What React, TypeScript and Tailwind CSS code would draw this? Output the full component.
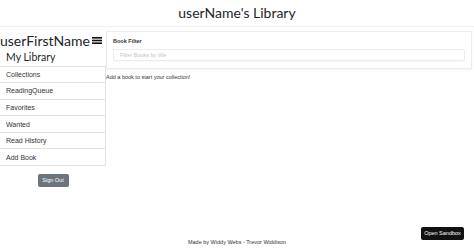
import React from "react";

const items = ["Collections", "ReadingQueue", "Favorites", "Wanted", "Read History", "Add Book"];

export default function App() {
  return (
    <div className="relative flex h-[248px] w-[474px] flex-col overflow-hidden bg-white text-[#212529] [font-family:'Liberation_Sans',Arial,sans-serif]">
      <header className="flex h-[27px] shrink-0 items-center justify-center border-b border-[#f0f0f0]">
        <h1 className="text-[14px] leading-none text-[#212529] [font-family:Lato,sans-serif]">userName's Library</h1>
      </header>
      <div className="flex flex-1">
        <aside className="flex w-[106px] shrink-0 flex-col">
          <div className="mt-[5px] flex h-[17px] items-center gap-[2px]">
            <span className="text-[14px] leading-none [font-family:Lato,sans-serif]">userFirstName</span>
            <svg width="10" height="7" viewBox="0 0 10 7" className="mt-[-1px]">
              <rect x="0" y="0" width="10" height="1.6" fill="#111" />
              <rect x="0" y="2.7" width="10" height="1.6" fill="#111" />
              <rect x="0" y="5.4" width="10" height="1.6" fill="#111" />
            </svg>
          </div>
          <div className="mt-[2px] flex h-[13px] items-center pl-[6px]">
            <span className="text-[10.5px] leading-none [font-family:Lato,sans-serif]">My Library</span>
          </div>
          <ul className="mt-[1.5px] border-r border-t border-[#e2e2e2]">
            {items.map((it) => (
              <li
                key={it}
                className="flex h-[16.6px] items-center border-b border-[#e2e2e2] pl-[6px] text-[7px] leading-none text-[#333]"
              >
                {it}
              </li>
            ))}
          </ul>
          <div className="mt-[8px] flex justify-center">
            <button className="flex h-[13px] w-[31px] items-center justify-center rounded-[2px] bg-[#6c757d] text-[5.5px] leading-none text-white">
              Sign Out
            </button>
          </div>
        </aside>
        <main className="flex-1 pr-[2px] pt-[4px]">
          <div className="border border-[#ececec] px-[6px] pb-[7px] pt-[6px] shadow-[0_1px_2px_rgba(0,0,0,0.06)]">
            <div className="text-[5.5px] font-bold leading-[7px] text-[#333]">Book Filter</div>
            <div className="mt-[4px] flex h-[12px] items-center rounded-[2px] border border-[#ececec] pl-[6px] text-[5.5px] text-[#c4c4c4] shadow-[0_1px_1px_rgba(0,0,0,0.03)]">
              Filter Books by title
            </div>
          </div>
          <div className="mt-[5px] text-[5.5px] leading-[7px] text-[#333]">Add a book to start your collection!</div>
        </main>
      </div>
      <footer className="pb-[2px] text-center text-[5.5px] leading-[7px] text-[#333]">Made by Widdy Webs - Trevor Widdison</footer>
      <button className="absolute bottom-[8px] right-[10px] flex h-[13px] w-[43px] items-center justify-center rounded-[2px] bg-[#111] text-[5.5px] leading-none text-white">
        Open Sandbox
      </button>
    </div>
  );
}
